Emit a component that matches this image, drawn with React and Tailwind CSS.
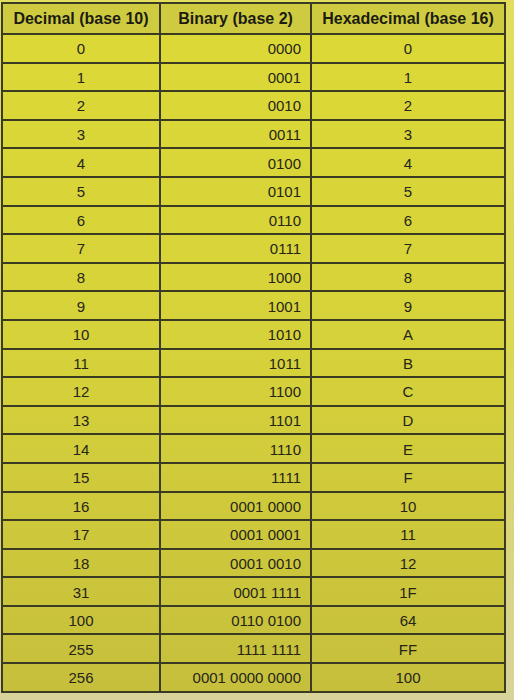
import React from "react";

const rows = [
  ["0", "0000", "0"],
  ["1", "0001", "1"],
  ["2", "0010", "2"],
  ["3", "0011", "3"],
  ["4", "0100", "4"],
  ["5", "0101", "5"],
  ["6", "0110", "6"],
  ["7", "0111", "7"],
  ["8", "1000", "8"],
  ["9", "1001", "9"],
  ["10", "1010", "A"],
  ["11", "1011", "B"],
  ["12", "1100", "C"],
  ["13", "1101", "D"],
  ["14", "1110", "E"],
  ["15", "1111", "F"],
  ["16", "0001 0000", "10"],
  ["17", "0001 0001", "11"],
  ["18", "0001 0010", "12"],
  ["31", "0001 1111", "1F"],
  ["100", "0110 0100", "64"],
  ["255", "1111 1111", "FF"],
  ["256", "0001 0000 0000", "100"],
];

export default function App() {
  return (
    <div
      className="w-[514px] h-[700px] overflow-hidden bg-gradient-to-b from-[#e2de5e] via-[#dcd852] to-[#d8d39a] pt-[2px] pl-[1px]"
      style={{ fontFamily: '"Liberation Sans", Arial, sans-serif' }}
    >
      <table className="w-[505px] border-collapse border-2 border-[#3b3a22] bg-gradient-to-b from-[#dcd936] via-[#d6d23a] to-[#c6bf3c] text-[#26251a]">
        <colgroup>
          <col className="w-[158px]" />
          <col className="w-[151px]" />
          <col />
        </colgroup>
        <thead>
          <tr className="h-[31px] bg-[#cfcb40]">
            <th className="border-2 border-[#3b3a22] text-[16px] font-bold text-[#1c1b12] text-center leading-none pt-[1px]">
              Decimal (base 10)
            </th>
            <th className="border-2 border-[#3b3a22] text-[16px] font-bold text-[#1c1b12] text-center leading-none pt-[1px]">
              Binary (base 2)
            </th>
            <th className="border-2 border-[#3b3a22] text-[16px] font-bold text-[#1c1b12] text-center leading-none pt-[1px]">
              Hexadecimal (base 16)
            </th>
          </tr>
        </thead>
        <tbody>
          {rows.map(([d, b, h]) => (
            <tr key={d} className="h-[28.6px]">
              <td className="border-2 border-[#3b3a22] text-[15px] leading-none text-center pt-[1px]">
                {d}
              </td>
              <td className="border-2 border-[#3b3a22] text-[15px] leading-none text-right pr-[9px] pt-[1px]">
                {b}
              </td>
              <td className="border-2 border-[#3b3a22] text-[15px] leading-none text-center pt-[1px]">
                {h}
              </td>
            </tr>
          ))}
        </tbody>
      </table>
    </div>
  );
}
